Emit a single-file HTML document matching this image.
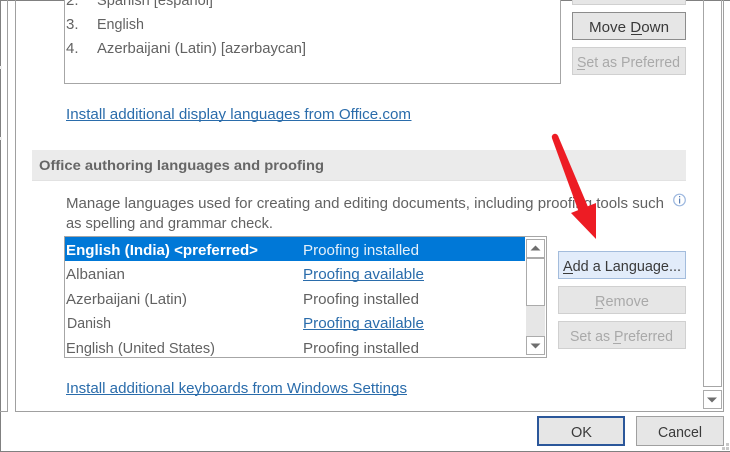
<!DOCTYPE html>
<html>
<head>
<meta charset="utf-8">
<style>
html,body{margin:0;padding:0;background:#fff;width:730px;height:452px;overflow:hidden}
svg{display:block}
text{font-family:"Liberation Sans",sans-serif;font-size:15px;fill:#626262}
.l{fill:#2a6cab}
.b{font-weight:bold}
.d{fill:#a9a9a9}
.k{fill:#3a3a3a}
</style>
</head>
<body>
<svg width="730" height="452" viewBox="0 0 730 452" xmlns="http://www.w3.org/2000/svg">
<rect width="730" height="452" fill="#fff"/>
<!-- window frames -->
<g fill="none" shape-rendering="crispEdges">
<path d="M0.5 452V0.5H730" stroke="#808080"/>
<path d="M0 451.5H730" stroke="#808080"/>
<path d="M7.5 0V411.5H0" stroke="#a0a0a0"/>
<path d="M15.5 0V411.5H723.5V0" stroke="#a0a0a0"/>
<path d="M703.5 0V386.500H721.500V0" stroke="#a6a6a6"/>
<rect x="703.5" y="390.5" width="18" height="18" stroke="#ababab"/>
</g>
<path d="M707 397.5h10l-5 5z" fill="#6e6e6e"/>
<rect x="0" y="66" width="2" height="3" fill="#f0f0f0"/>
<rect x="0" y="137" width="2" height="3" fill="#f0f0f0"/>
<!-- display list -->
<rect x="64.5" y="-2" width="496" height="85.500" fill="#fff" stroke="#a6a6a6" shape-rendering="crispEdges"/>
<text x="66" y="5">2.</text>
<text x="97" y="5" textLength="116" lengthAdjust="spacingAndGlyphs">Spanish [español]</text>
<text x="66" y="29">3.</text>
<text x="97" y="29" textLength="47" lengthAdjust="spacingAndGlyphs">English</text>
<text x="66" y="53">4.</text>
<text x="97" y="53" textLength="209" lengthAdjust="spacingAndGlyphs">Azerbaijani (Latin) [azərbaycan]</text>
<!-- top buttons -->
<rect x="572.500" y="-5" width="113" height="9.500" fill="#e6e6e6" stroke="#d0d0d0" shape-rendering="crispEdges"/>
<rect x="572.500" y="12.500" width="113" height="27" fill="#e6e6e6" stroke="#8c8c8c" shape-rendering="crispEdges"/>
<text class="k" x="589" y="32" textLength="80" lengthAdjust="spacingAndGlyphs">Move Down</text>
<rect x="631" y="34" width="11" height="1" fill="#3a3a3a"/>
<rect x="572.500" y="47.500" width="113" height="27" fill="#e6e6e6" stroke="#d0d0d0" shape-rendering="crispEdges"/>
<text class="d" x="577" y="67" textLength="103" lengthAdjust="spacingAndGlyphs">Set as Preferred</text>
<rect x="577" y="69" width="8" height="1" fill="#a9a9a9"/>
<!-- link 1 -->
<text class="l" x="66" y="119" textLength="345" lengthAdjust="spacingAndGlyphs">Install additional display languages from Office.com</text>
<rect x="66" y="120" width="345.500" height="1" fill="#2a6cab"/>
<!-- section -->
<rect x="32" y="150" width="654" height="30" fill="#ebebeb"/>
<rect x="32" y="180" width="654" height="1" fill="#e2e2e2"/>
<text class="b" x="39" y="170" textLength="285" lengthAdjust="spacingAndGlyphs" style="font-size:14px;fill:#666">Office authoring languages and proofing</text>
<text x="66" y="208" textLength="598" lengthAdjust="spacingAndGlyphs">Manage languages used for creating and editing documents, including proofing tools such</text>
<text x="66" y="228" textLength="207" lengthAdjust="spacingAndGlyphs">as spelling and grammar check.</text>
<!-- info icon -->
<circle cx="679.500" cy="200" r="5.800" fill="#fff" stroke="#9db8df" stroke-width="1.200"/>
<rect x="679" y="196" width="1.200" height="1.300" fill="#5a7fb5"/>
<rect x="679" y="198.500" width="1.200" height="5" fill="#5a7fb5"/>
<!-- language list -->
<rect x="64.500" y="236.500" width="482" height="121" fill="#fff" stroke="#a6a6a6" shape-rendering="crispEdges"/>
<rect x="65" y="237" width="460" height="24" fill="#0078d7"/>
<text class="b" x="66" y="255" textLength="192" lengthAdjust="spacingAndGlyphs" style="fill:#fff">English (India) &lt;preferred&gt;</text>
<text x="303" y="255" textLength="116" lengthAdjust="spacingAndGlyphs" style="fill:#e4f0fa">Proofing installed</text>
<text x="66" y="279" textLength="59" lengthAdjust="spacingAndGlyphs">Albanian</text>
<text class="l" x="303" y="279" textLength="121" lengthAdjust="spacingAndGlyphs">Proofing available</text>
<rect x="303" y="280" width="121" height="1" fill="#2a6cab"/>
<text x="66" y="304" textLength="121" lengthAdjust="spacingAndGlyphs">Azerbaijani (Latin)</text>
<text x="303" y="304" textLength="116" lengthAdjust="spacingAndGlyphs">Proofing installed</text>
<text x="67" y="328" textLength="44" lengthAdjust="spacingAndGlyphs">Danish</text>
<text class="l" x="303" y="328" textLength="121" lengthAdjust="spacingAndGlyphs">Proofing available</text>
<rect x="303" y="329" width="121" height="1" fill="#2a6cab"/>
<text x="66" y="353" textLength="149" lengthAdjust="spacingAndGlyphs">English (United States)</text>
<text x="303" y="353" textLength="116" lengthAdjust="spacingAndGlyphs">Proofing installed</text>
<!-- list scrollbar -->
<rect x="526" y="306" width="19" height="30" fill="#e6e6e6"/>
<g fill="#fff" stroke="#ababab" shape-rendering="crispEdges">
<rect x="526.500" y="239.500" width="18" height="18"/>
<rect x="526.500" y="258.500" width="18" height="47"/>
<rect x="526.500" y="336.500" width="18" height="18"/>
</g>
<path d="M530.500 250.500h10l-5-5z" fill="#6e6e6e"/>
<path d="M530.500 343.500h10l-5 5z" fill="#6e6e6e"/>
<!-- right buttons -->
<rect x="558.500" y="251.500" width="127" height="27" fill="#e2ecfa" stroke="#a3bcdc" shape-rendering="crispEdges"/>
<text class="k" x="563" y="271" textLength="118" lengthAdjust="spacingAndGlyphs">Add a Language...</text>
<rect x="563" y="273" width="10" height="1" fill="#3a3a3a"/>
<rect x="558.500" y="286.500" width="127" height="27" fill="#e6e6e6" stroke="#d0d0d0" shape-rendering="crispEdges"/>
<text class="d" x="595" y="306" textLength="54" lengthAdjust="spacingAndGlyphs">Remove</text>
<rect x="595" y="308" width="8" height="1" fill="#a9a9a9"/>
<rect x="558.500" y="321.500" width="127" height="27" fill="#e6e6e6" stroke="#d0d0d0" shape-rendering="crispEdges"/>
<text class="d" x="570" y="341" textLength="103" lengthAdjust="spacingAndGlyphs">Set as Preferred</text>
<rect x="613" y="343" width="8" height="1" fill="#a9a9a9"/>
<!-- link 2 -->
<text class="l" x="66" y="393" textLength="341" lengthAdjust="spacingAndGlyphs">Install additional keyboards from Windows Settings</text>
<rect x="66" y="394" width="341" height="1" fill="#2a6cab"/>
<!-- OK / Cancel -->
<rect x="538" y="417" width="86" height="28" fill="#e6e6e6" stroke="#2b579a" stroke-width="2" shape-rendering="crispEdges"/>
<text class="k" x="571" y="437" textLength="21" lengthAdjust="spacingAndGlyphs">OK</text>
<rect x="636.500" y="416.500" width="87" height="29" fill="#e6e6e6" stroke="#a0a0a0" shape-rendering="crispEdges"/>
<text class="k" x="658" y="437" textLength="44" lengthAdjust="spacingAndGlyphs">Cancel</text>
<!-- grip -->
<g fill="#c8c8c8">
<rect x="726" y="443" width="3" height="3"/>
<rect x="722" y="447" width="3" height="3"/>
<rect x="726" y="447" width="3" height="3"/>
</g>
<!-- red arrow -->
<circle cx="555" cy="137" r="3.200" fill="#ed1c24"/>
<path d="M552 138.200L558 135.800L591 214L581 218Z" fill="#ed1c24"/>
<path d="M596 203L596 239L571 213Z" fill="#ed1c24"/>
</svg>
</body>
</html>
